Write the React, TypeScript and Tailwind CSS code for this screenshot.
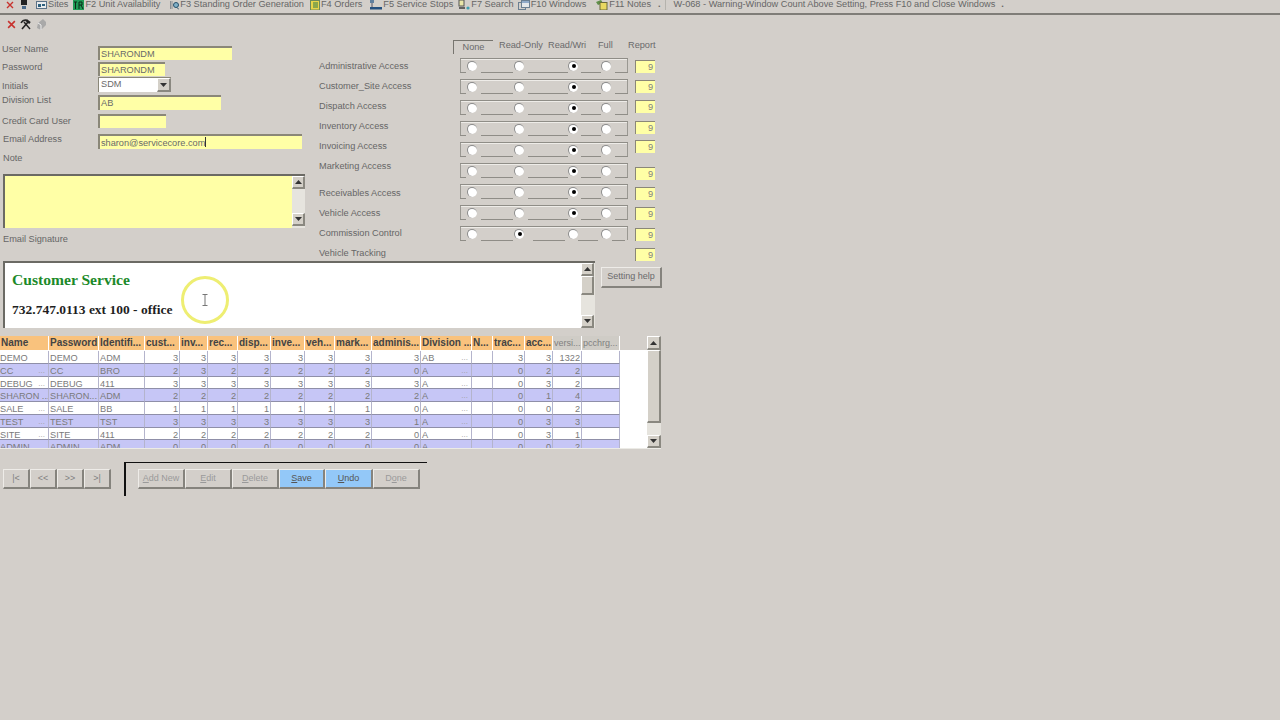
import type { ReactNode } from "react";

const font = "font-['Liberation_Sans',Arial,sans-serif]";

const accessRows = [
  { label: "Administrative Access", labelClass: "mt-[1px]", reportClass: "mt-[2px]", picked: 2 },
  { label: "Customer_Site Access", labelClass: "mt-0", reportClass: "mt-[1px]", picked: 2 },
  { label: "Dispatch Access", labelClass: "mt-[-1px]", reportClass: "mt-0", picked: 2 },
  { label: "Inventory Access", labelClass: "mt-[-2px]", reportClass: "mt-0", picked: 2 },
  { label: "Invoicing Access", labelClass: "mt-[-3px]", reportClass: "mt-[-2px]", picked: 2 },
  { label: "Marketing Access", labelClass: "mt-[-4px]", reportClass: "mt-[4px]", picked: 2 },
  { label: "Receivables Access", labelClass: "mt-[2px]", reportClass: "mt-[3px]", picked: 2 },
  { label: "Vehicle Access", labelClass: "mt-[1px]", reportClass: "mt-[2px]", picked: 2 },
  { label: "Commission Control", labelClass: "mt-0", reportClass: "mt-[2px]", picked: 1 },
];

const columns = [
  "Name", "Password", "Identifi...", "cust...", "inv...", "rec...", "disp...", "inve...", "veh...",
  "mark...", "adminis...", "Division ...", "N...", "trac...", "acc...", "versi...", "pcchrg...",
];

const rows = [
  ["DEMO", "DEMO", "ADM", 3, 3, 3, 3, 3, 3, 3, 3, "AB", "", 3, 3, 1322, ""],
  ["CC", "CC", "BRO", 2, 3, 2, 2, 2, 2, 2, 0, "A", "", 0, 2, 2, ""],
  ["DEBUG", "DEBUG", "411", 3, 3, 3, 3, 3, 3, 3, 3, "A", "", 0, 3, 2, ""],
  ["SHARON ...", "SHARON...", "ADM", 2, 2, 2, 2, 2, 2, 2, 2, "A", "", 0, 1, 4, ""],
  ["SALE", "SALE", "BB", 1, 1, 1, 1, 1, 1, 1, 0, "A", "", 0, 0, 2, ""],
  ["TEST", "TEST", "TST", 3, 3, 3, 3, 3, 3, 3, 1, "A", "", 0, 3, 3, ""],
  ["SITE", "SITE", "411", 2, 2, 2, 2, 2, 2, 2, 0, "A", "", 0, 3, 1, ""],
  ["ADMIN", "ADMIN", "ADM", 0, 0, 0, 0, 0, 0, 0, 0, "A", "", 0, 0, 2, ""],
];

const gridCols =
  "grid grid-cols-[49px_50px_46px_35px_28px_30px_33px_34px_30px_37px_49px_51px_21px_32px_28px_29px_38px]";

function ToolItem({ icon, label, className }: { icon: ReactNode; label: string; className: string }) {
  return (
    <div className={`flex shrink-0 items-center gap-[1px] whitespace-nowrap ${className}`}>
      {icon}
      <span>{label}</span>
    </div>
  );
}

function RedX({ size }: { size: number }) {
  return (
    <svg width={size} height={size} viewBox="0 0 8 8" className="shrink-0">
      <path d="M1 1l6 6M7 1L1 7" stroke="#c8322e" strokeWidth="1.4" fill="none" />
    </svg>
  );
}

function TinyIcon({ kind }: { kind: "sites" | "unit" | "order" | "orders" | "stops" | "search" | "windows" | "notes" }) {
  if (kind === "unit")
    return (
      <svg width="11" height="10" viewBox="0 0 11 10">
        <rect width="11" height="10" fill="#1f9a55" />
        <path d="M1 2h3M2.5 2v7M6 2v7M6 2h3v3H6M8 5l2 4" stroke="#0b2a18" fill="none" />
      </svg>
    );
  if (kind === "orders")
    return (
      <svg width="10" height="10" viewBox="0 0 10 10">
        <rect x="0.5" y="0.5" width="9" height="9.5" fill="#e8d44a" stroke="#6f8a5a" />
        <path d="M3 3h5M3 5h5M3 7h5" stroke="#2f7a4a" />
      </svg>
    );
  if (kind === "order")
    return (
      <svg width="9" height="10" viewBox="0 0 9 10">
        <path d="M0.5 1v8M2 1v8" stroke="#8a8f94" />
        <circle cx="6" cy="5" r="2.5" fill="#7fb0c8" stroke="#27506b" />
        <path d="M7 7.5l2 2" stroke="#27506b" />
      </svg>
    );
  if (kind === "stops")
    return (
      <svg width="13" height="10" viewBox="0 0 13 10">
        <rect x="1" y="0" width="4" height="3" fill="#5f7f9f" />
        <path d="M3 3v4" stroke="#556" />
        <rect x="1" y="7" width="12" height="2.5" fill="#24507f" />
      </svg>
    );
  if (kind === "search")
    return (
      <svg width="12" height="10" viewBox="0 0 12 10">
        <rect x="1" y="0" width="5" height="6" fill="#e9e6a8" stroke="#555" />
        <path d="M1 8h6" stroke="#333" strokeWidth="1.4" />
        <circle cx="10" cy="8" r="1.6" fill="#3f9fb0" />
      </svg>
    );
  if (kind === "windows")
    return (
      <svg width="12" height="10" viewBox="0 0 12 10" fill="none" stroke="#6b7f92">
        <rect x="0.5" y="2.5" width="7" height="7" />
        <rect x="3.5" y="0.5" width="8" height="7" fill="#e4e7ea" />
        <path d="M4 2h7" stroke="#3f6fa8" />
      </svg>
    );
  if (kind === "notes")
    return (
      <svg width="12" height="10" viewBox="0 0 12 10">
        <path d="M0 2l5-2 2 3-5 2z" fill="#5f8f4a" />
        <rect x="4" y="2.5" width="7" height="7.5" fill="#e8d860" stroke="#6a6a3a" />
      </svg>
    );
  return (
    <svg width="11" height="8" viewBox="0 0 11 8">
      <rect x="0.5" y="0.5" width="10" height="7" fill="#e8eaec" stroke="#5b7186" />
      <rect x="2" y="3" width="3" height="3" fill="#2d5f7d" />
      <rect x="6" y="3" width="3" height="2" fill="#2d5f7d" />
    </svg>
  );
}

function Label({ children, className }: { children: ReactNode; className: string }) {
  return <div className={`h-[14px] leading-[14px] text-[#666] whitespace-nowrap ${className}`}>{children}</div>;
}

function Field({ value, className, caret }: { value: string; className: string; caret?: boolean }) {
  return (
    <div
      className={`border-t-2 border-l-2 border-t-[#8a8778] border-l-[#8a8778] bg-[#ffffa6] pl-[1px] leading-[12px] text-[#6a6a6a] ${className}`}
    >
      {value}
      {caret && <span className="inline-block h-[10px] w-px translate-y-[1px] bg-[#333]" />}
    </div>
  );
}

function Radio({ on }: { on: boolean }) {
  return (
    <div className="flex h-[10px] w-[10px] items-center justify-center rounded-full border-t border-l border-t-[#8a8a8a] border-l-[#8a8a8a] bg-white">
      {on && <div className="h-[4px] w-[4px] rounded-full bg-black" />}
    </div>
  );
}

function RadioGroup({ picked }: { picked: number }) {
  const second = picked === 1;
  return (
    <div className="flex h-[15px] w-[168px] flex-col border-t border-t-[#8f8d87] shadow-[inset_0_1px_0_#eeece8]">
      <div className="flex h-[14px] items-center border-x border-x-[#9a9892] pl-[6px]">
        <Radio on={false} />
        <div className="ml-[37px]">
          <Radio on={picked === 1} />
        </div>
        <div className="ml-[44px]">
          <Radio on={picked === 2} />
        </div>
        <div className="ml-[23px]">
          <Radio on={false} />
        </div>
      </div>
      <div className="flex h-px">
        <div className="w-[6px] bg-[#8f8d87]" />
        <div className="ml-[15px] w-[32px] bg-[#8f8d87]" />
        {second ? (
          <div className="ml-[20px] w-[32px] bg-[#8f8d87]" />
        ) : (
          <div className="ml-[15px] w-[40px] bg-[#8f8d87]" />
        )}
        <div className="ml-[13px] w-[20px] bg-[#8f8d87]" />
        <div className="ml-[14px] w-[13px] bg-[#8f8d87]" />
      </div>
    </div>
  );
}

function Report({ className }: { className: string }) {
  return (
    <div
      className={`ml-[7px] h-[13px] w-[20px] border-t border-l border-t-[#8a8778] border-l-[#8a8778] bg-[#ffffa6] pr-[2px] text-right leading-[12px] text-[#808080] ${className}`}
    >
      9
    </div>
  );
}

function Arrow({ up, size }: { up: boolean; size: string }) {
  return (
    <div
      className={`flex shrink-0 items-center justify-center border-t border-l border-r-2 border-b-2 border-t-white border-l-white border-r-[#8a8880] border-b-[#8a8880] bg-[#d4d0c8] ${size}`}
    >
      <svg width="7" height="4" viewBox="0 0 7 4">
        <path d={up ? "M3.5 0L7 4H0z" : "M0 0h7L3.5 4z"} fill="#333" />
      </svg>
    </div>
  );
}

function NavButton({ children, className }: { children: ReactNode; className: string }) {
  return (
    <div
      className={`flex items-center justify-center border-t border-l border-r-2 border-b-2 border-t-[#eeece8] border-l-[#eeece8] border-r-[#85837d] border-b-[#85837d] text-[9px] ${className}`}
    >
      {children}
    </div>
  );
}

export default function App() {
  return (
    <div className={`relative h-[720px] w-[1280px] overflow-hidden bg-[#d3cfca] text-[9.2px] ${font}`}>
      {/* top toolbar, cut off by the capture */}
      <div className="flex h-[15px] items-start overflow-hidden border-b-2 border-b-[#7f7d78] pl-[6px] text-[#666]">
        <div className="mt-[-1px] flex h-[11px] items-center">
          <div className="w-[14px]">
            <RedX size={8} />
          </div>
          <svg className="shrink-0" width="8" height="9" viewBox="0 0 8 9">
            <path d="M1 0h6v5H1z" fill="#222" />
            <path d="M2 6h4v3H2z" fill="#4a6a8a" />
          </svg>
          <ToolItem className="ml-[8px]" icon={<TinyIcon kind="sites" />} label=" Sites" />
          <ToolItem className="ml-[5px]" icon={<TinyIcon kind="unit" />} label="F2 Unit Availability" />
          <ToolItem className="ml-[10px]" icon={<TinyIcon kind="order" />} label="F3 Standing Order Generation" />
          <ToolItem className="ml-[6px]" icon={<TinyIcon kind="orders" />} label="F4 Orders" />
          <ToolItem className="ml-[7px]" icon={<TinyIcon kind="stops" />} label="F5 Service Stops" />
          <ToolItem className="ml-[5px]" icon={<TinyIcon kind="search" />} label="F7 Search" />
          <ToolItem className="ml-[4px]" icon={<TinyIcon kind="windows" />} label="F10 Windows" />
          <ToolItem className="ml-[10px]" icon={<TinyIcon kind="notes" />} label="F11 Notes" />
          <span className="ml-[7px] font-bold">.</span>
          <div className="ml-[4px] h-[11px] w-px bg-[#b5b3ad]" />
          <span className="ml-[8px] whitespace-nowrap">W-068 - Warning-Window Count Above Setting, Press F10 and Close Windows</span>
          <span className="ml-[6px] font-bold">.</span>
        </div>
      </div>

      {/* form toolbar */}
      <div className="flex h-[16px] items-center pl-[7px] pt-[2px]">
        <RedX size={9} />
        <svg className="ml-[4px]" width="12" height="11" viewBox="0 0 12 11" fill="none" stroke="#222">
          <path d="M2 10L8 3" strokeWidth="1.6" />
          <path d="M6 1l4 3" strokeWidth="2.4" />
          <path d="M10 10L4 3" strokeWidth="1.4" />
          <path d="M1 4c1-2 3-3 5-3" strokeWidth="1.4" />
        </svg>
        <svg className="ml-[4px]" width="11" height="11" viewBox="0 0 11 11">
          <path d="M2 4l5-4 3 3v3l-5 5-4-2z" fill="#a9a9a9" />
          <path d="M2 4l3 2v5" fill="none" stroke="#eee" />
        </svg>
      </div>

      {/* user form + access levels */}
      <div className="flex h-[229px]">
        <div className="w-[319px] shrink-0">
          <div className="mt-[15px] flex h-[16px]">
            <Label className="w-[98px] pl-[2px] mt-[-4px]">User Name</Label>
            <Field value="SHARONDM" className="h-[14px] w-[134px]" />
          </div>
          <div className="flex h-[15px]">
            <Label className="w-[98px] pl-[2px] mt-[-2px]">Password</Label>
            <Field value="SHARONDM" className="h-[14px] w-[67px]" />
          </div>
          <div className="flex h-[18px]">
            <Label className="w-[98px] pl-[2px] mt-[2px]">Initials</Label>
            <div className="flex h-[15px] w-[73px] border-t border-l border-t-[#8a8778] border-l-[#8a8778] bg-white">
              <div className="flex-1 pl-[2px] leading-[12px] text-[#6a6a6a]">SDM</div>
              <Arrow up={false} size="h-[14px] w-[14px]" />
            </div>
          </div>
          <div className="flex h-[19px]">
            <Label className="w-[98px] pl-[2px] mt-[-2px]">Division List</Label>
            <Field value="AB" className="h-[15px] w-[123px]" />
          </div>
          <div className="flex h-[20px]">
            <Label className="w-[98px] pl-[2px]">Credit Card User</Label>
            <Field value="" className="h-[14px] w-[68px]" />
          </div>
          <div className="flex h-[15px]">
            <Label className="w-[98px] pl-[3px] mt-[-2px]">Email Address</Label>
            <Field value="sharon@servicecore.com" caret className="h-[15px] w-[204px]" />
          </div>
          <Label className="pl-[3px] mt-[2px]">Note</Label>
          <div className="ml-[3px] mt-[9px] flex h-[54px] w-[302px] border-t-2 border-l-2 border-t-[#6b6a64] border-l-[#6b6a64] bg-[#ffffa6]">
            <div className="flex-1" />
            <div className="flex w-[13px] flex-col justify-between bg-[#e6e4de] pb-[2px]">
              <Arrow up size="h-[13px] w-[13px]" />
              <Arrow up={false} size="h-[13px] w-[13px]" />
            </div>
          </div>
          <Label className="pl-[3px] mt-[4px]">Email Signature</Label>
        </div>

        <div className="w-[343px] shrink-0">
          <div className="ml-[134px] flex h-[27px] pt-[9px] text-[#6a6a6a]">
            <div className="h-[14px] w-[40px] border-t border-l border-t-[#77756f] border-l-[#77756f] text-center leading-[13px]">None</div>
            <div className="ml-[6px] mt-[-1px] w-[44px] whitespace-nowrap">Read-Only</div>
            <div className="ml-[5px] mt-[-1px] w-[39px] overflow-hidden whitespace-nowrap">Read/Wri</div>
            <div className="ml-[11px] mt-[-1px] w-[13px]">Full</div>
            <div className="ml-[17px] mt-[-1px] w-[28px]">Report</div>
          </div>
          {accessRows.map((row) => (
            <div key={row.label} className="flex h-[21px] items-start">
              <Label className={`w-[141px] ${row.labelClass}`}>{row.label}</Label>
              <RadioGroup picked={row.picked} />
              <Report className={row.reportClass} />
            </div>
          ))}
          <div className="flex h-[14px] items-start">
            <Label className="w-[309px] mt-[-1px]">Vehicle Tracking</Label>
            <Report className="mt-[1px]" />
          </div>
        </div>
      </div>

      {/* signature editor */}
      <div className="mt-[1px] flex h-[67px] w-[662px]">
        <div className="ml-[3px] flex h-[67px] w-[592px] border-t-2 border-l-2 border-t-[#6b6a64] border-l-[#6b6a64] bg-white">
          <div className="flex-1 overflow-hidden pl-[7px] font-['Liberation_Serif',serif] font-bold">
            <div className="mt-[9px] text-[15.6px] leading-[16px] text-[#1c8a2a]">Customer Service</div>
            <div className="mt-[15px] text-[13.5px] leading-[14px] text-[#1f1f1f]">732.747.0113 ext 100 - office</div>
          </div>
          <div className="flex w-[14px] flex-col bg-[#e6e4de]">
            <Arrow up size="h-[13px] w-[13px]" />
            <Arrow up size="h-[19px] w-[13px] [&>svg]:hidden" />
            <div className="flex-1" />
            <Arrow up={false} size="h-[13px] w-[13px]" />
          </div>
        </div>
        <NavButton className="ml-[6px] mt-[6px] h-[21px] w-[61px] text-[#6a6a6a]">Setting help</NavButton>
      </div>

      {/* users grid */}
      <div className="mt-[8px] h-[113px] w-[661px] overflow-hidden border-b border-b-[#ecebe6]">
        <div className="flex h-[112px]">
          <div className="w-[647px] overflow-hidden bg-white">
            <div className="h-[14px] bg-[#d3cfca]">
              <div className={gridCols}>
                {columns.map((col, i) => (
                  <div
                    key={col}
                    className={`h-[14px] overflow-hidden whitespace-nowrap border-r border-r-white pl-[1px] leading-[14px] ${
                      i < 15 ? "bg-[#f9c27d] text-[10px] font-bold text-[#444]" : "bg-[#cfccc6] text-[9px] text-[#808080]"
                    }`}
                  >
                    {col}
                  </div>
                ))}
              </div>
            </div>
            <div className="mt-[1px]">
              {rows.map((row, r) => (
                <div key={r} className={`${gridCols} h-[12.75px] w-[620px] ${r % 2 ? "bg-[#c6c6f6]" : "bg-white"}`}>
                  {row.map((cell, c) => {
                    const dotted = (c === 0 && r !== 0 && r !== 3 && r !== 7) || c === 11;
                    return (
                      <div
                        key={c}
                        className={`relative h-[12.75px] overflow-hidden whitespace-nowrap border-r border-b border-r-[#b4b4cc] border-b-[#8f8fa8] leading-[14px] text-[#7a7a7a] ${
                          typeof cell === "number" ? "pr-[1px] text-right" : c === 0 ? "" : "pl-[1px]"
                        }`}
                      >
                        {cell}
                        {dotted && <span className="absolute right-[3px] top-0 text-[8px] text-[#a0a0a0]">...</span>}
                      </div>
                    );
                  })}
                </div>
              ))}
            </div>
          </div>
          <div className="flex w-[14px] flex-col bg-[#e6e4de]">
            <Arrow up size="h-[14px] w-[14px]" />
            <Arrow up size="h-[73px] w-[14px] [&>svg]:hidden" />
            <div className="flex-1" />
            <Arrow up={false} size="h-[13px] w-[14px]" />
          </div>
        </div>
      </div>

      {/* record navigation + actions */}
      <div className="flex">
        <div className="mt-[20px] ml-[3px] flex w-[121px] items-start">
          {["|<", "<<", ">>", ">|"].map((t) => (
            <NavButton key={t} className="h-[20px] w-[27px] bg-[#d3cfca] text-[#808080]">
              {t}
            </NavButton>
          ))}
        </div>
        <div className="mt-[13px] h-[34px] w-[2px] bg-[#111]" />
        <div className="mt-[13px]">
          <div className="h-px w-[301px] bg-[#111]" />
          <div className="ml-[12px] mt-[6px] flex">
            <NavButton className="h-[20px] w-[47px] text-[#9a9a9a]"><span><u>A</u>dd New</span></NavButton>
            <NavButton className="h-[20px] w-[47px] text-[#9a9a9a]"><span><u>E</u>dit</span></NavButton>
            <NavButton className="h-[20px] w-[47px] text-[#9a9a9a]"><span><u>D</u>elete</span></NavButton>
            <NavButton className="h-[20px] w-[46px] bg-[#93c8f8] text-[#555]"><span><u>S</u>ave</span></NavButton>
            <NavButton className="h-[20px] w-[48px] bg-[#93c8f8] text-[#555]"><span><u>U</u>ndo</span></NavButton>
            <NavButton className="h-[20px] w-[47px] text-[#9a9a9a]"><span>D<u>o</u>ne</span></NavButton>
          </div>
        </div>
      </div>

      {/* pointer highlight */}
      <div className="absolute left-[181px] top-[276px] flex h-[48px] w-[48px] items-center justify-center rounded-full border-[3px] border-[#eeee72]">
        <svg width="6" height="12" viewBox="0 0 6 12" fill="none" stroke="#777">
          <path d="M0.5 0.5h5M0.5 11.5h5M3 0.5v11" />
        </svg>
      </div>
    </div>
  );
}
